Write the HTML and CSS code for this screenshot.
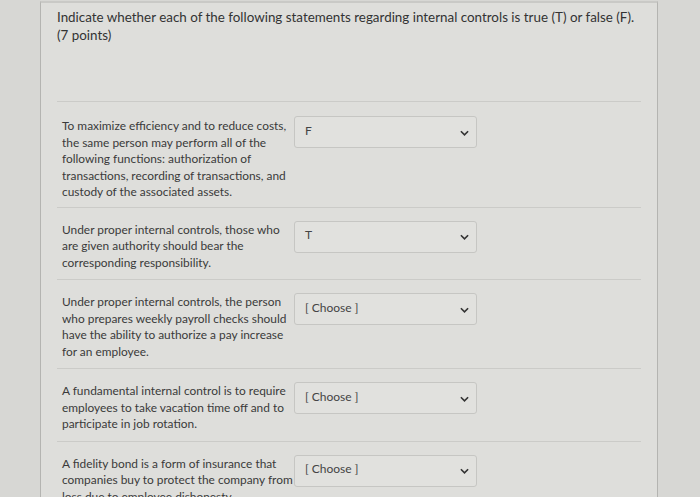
FILE: index.html
```html
<!DOCTYPE html>
<html lang="en">
<head>
  <meta charset="UTF-8">
  <meta name="viewport" content="width=device-width, initial-scale=1.0">
  <title>Internal controls quiz</title>
  <link rel="stylesheet" href="styles.css">
</head>
<body>
  <div class="page">
    <div class="question">
      <p class="prompt">Indicate whether each of the following statements regarding internal controls is true (T) or false (F).<br>(7 points)</p>

      <div class="answers">
        <div class="row">
          <p class="stmt">To maximize efficiency and to reduce costs, the same person may perform all of the following functions: authorization of transactions, recording of transactions, and custody of the associated assets.</p>
          <div class="pick">
            <span>F</span>
            <svg class="chev" viewBox="0 0 10 6" width="9" height="6"><path d="M1 1l4 4 4-4" fill="none" stroke="#333" stroke-width="1.8"/></svg>
          </div>
        </div>
        <div class="row">
          <p class="stmt">Under proper internal controls, those who are given authority should bear the corresponding responsibility.</p>
          <div class="pick">
            <span>T</span>
            <svg class="chev" viewBox="0 0 10 6" width="9" height="6"><path d="M1 1l4 4 4-4" fill="none" stroke="#333" stroke-width="1.8"/></svg>
          </div>
        </div>
        <div class="row">
          <p class="stmt">Under proper internal controls, the person who prepares weekly payroll checks should have the ability to authorize a pay increase for an employee.</p>
          <div class="pick">
            <span>[ Choose ]</span>
            <svg class="chev" viewBox="0 0 10 6" width="9" height="6"><path d="M1 1l4 4 4-4" fill="none" stroke="#333" stroke-width="1.8"/></svg>
          </div>
        </div>
        <div class="row">
          <p class="stmt">A fundamental internal control is to require employees to take vacation time off and to participate in job rotation.</p>
          <div class="pick">
            <span>[ Choose ]</span>
            <svg class="chev" viewBox="0 0 10 6" width="9" height="6"><path d="M1 1l4 4 4-4" fill="none" stroke="#333" stroke-width="1.8"/></svg>
          </div>
        </div>
        <div class="row">
          <p class="stmt">A fidelity bond is a form of insurance that companies buy to protect the company from loss due to employee dishonesty.</p>
          <div class="pick">
            <span>[ Choose ]</span>
            <svg class="chev" viewBox="0 0 10 6" width="9" height="6"><path d="M1 1l4 4 4-4" fill="none" stroke="#333" stroke-width="1.8"/></svg>
          </div>
        </div>
      </div>
    </div>
  </div>
</body>
</html>
```

FILE: styles.css
```css
* { margin: 0; padding: 0; box-sizing: border-box; }
html, body { height: 497px; overflow: hidden; }
body {
  font-family: Lato, "Open Sans", sans-serif;
  background: #d7d7d4;
  color: #3b3b3b;
}

.page {
  margin-left: 40px;
  width: 618px;
  height: 497px;
  background: #dededb;
  border-left: 1px solid #b4b4b1;
  border-right: 1px solid #b4b4b1;
  border-top: 2px solid #c9c9c6;
  margin-top: 1px;
}

.question { padding: 5px 16px 0 16px; }
.prompt { font-size: 13.4px; line-height: 18px; color: #333; white-space: nowrap; }

.answers { margin-top: 57px; }
.row {
  display: flex;
  align-items: flex-start;
  border-top: 1px solid #cbcbc8;
  padding: 14px 0 8px 5px;
}
.row:first-child { padding: 16px 0 6px 5px; }

.stmt {
  width: 232px;
  font-size: 11.9px;
  line-height: 16.5px;
  color: #3a3a3a;
}

.pick {
  display: flex;
  align-items: center;
  justify-content: space-between;
  width: 183px;
  height: 32px;
  margin-top: -1px;
  padding: 0 7px 0 10px;
  background: #e1e1de;
  border: 1px solid #c6c6c3;
  border-radius: 3px;
  font-size: 12px;
  color: #444;
}
.row:first-child .pick { margin-top: -2px; }
.pick span { margin-top: -4px; }
.chev { margin-top: 1px; }
```
